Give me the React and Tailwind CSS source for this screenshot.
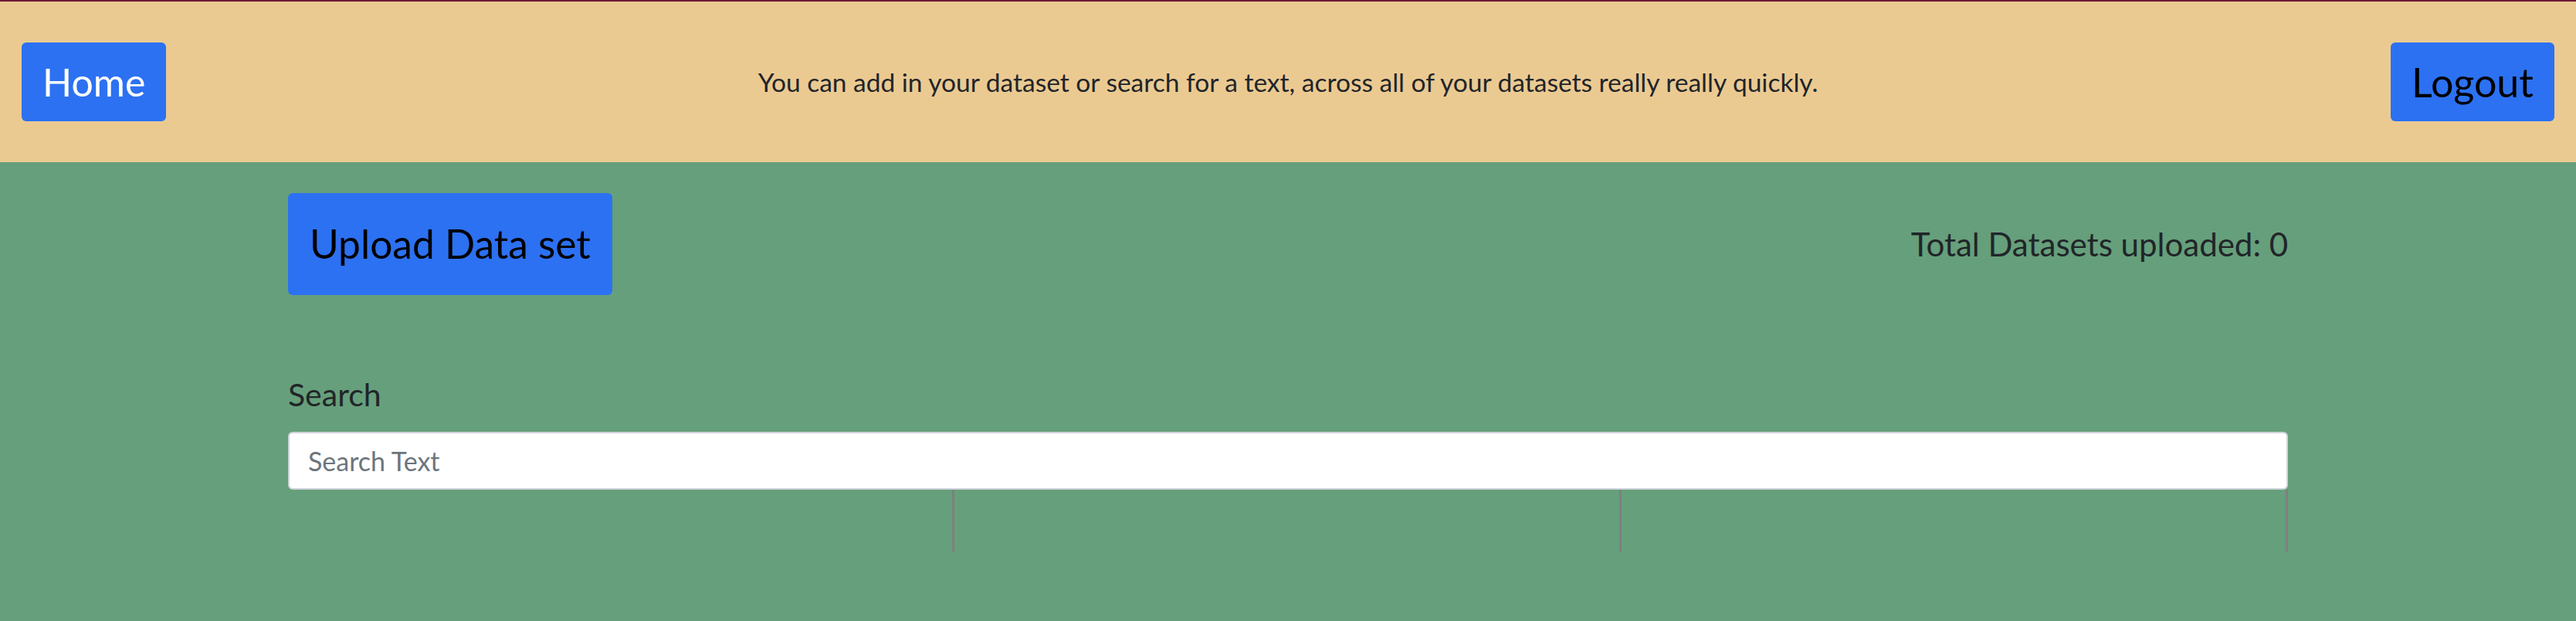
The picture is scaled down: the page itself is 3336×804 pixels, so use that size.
import React from 'react';

export default function App() {
  return (
    <div className="min-h-[804px] bg-[#669f7b] font-['Lato',sans-serif]">
      <header className="grid h-[210px] grid-cols-[1fr_auto_1fr] items-center border-t-2 border-[#6d1a36] bg-[#ebca92] px-[28px]">
        <div className="flex">
          <button className="h-[102px] rounded-[6px] bg-[#2c71f2] px-[27px] text-[50px] text-white">
            Home
          </button>
        </div>
        <p className="text-[33.5px] text-[#212529]">
          You can add in your dataset or search for a text, across all of your datasets really really quickly.
        </p>
        <div className="flex justify-end">
          <button className="h-[102px] rounded-[6px] bg-[#2c71f2] px-[27px] text-[52px] text-black">
            Logout
          </button>
        </div>
      </header>

      <main className="mx-auto w-[2590px] pt-[40px]">
        <div className="flex items-center justify-between">
          <button className="h-[132px] rounded-[6px] bg-[#2c71f2] px-[28px] text-[51.5px] text-black">
            Upload Data set
          </button>
          <span className="text-[42px] text-[#212529]">Total Datasets uploaded: 0</span>
        </div>

        <div className="mt-[104px]">
          <label className="block text-[41px] leading-[1.2] text-[#212529]">Search</label>
          <input
            type="text"
            placeholder="Search Text"
            className="mt-[24px] block h-[75px] w-full rounded-[6px] border-2 border-[#ced4da] bg-white px-[24px] text-[34px] text-[#212529] outline-none placeholder:text-[#6c757d]"
          />
          <div className="grid h-[80px] grid-cols-3">
            <div className="border-r-[3px] border-[#7f7f7f]" />
            <div className="border-r-[3px] border-[#7f7f7f]" />
            <div className="border-r-[3px] border-[#7f7f7f]" />
          </div>
        </div>
      </main>
    </div>
  );
}
